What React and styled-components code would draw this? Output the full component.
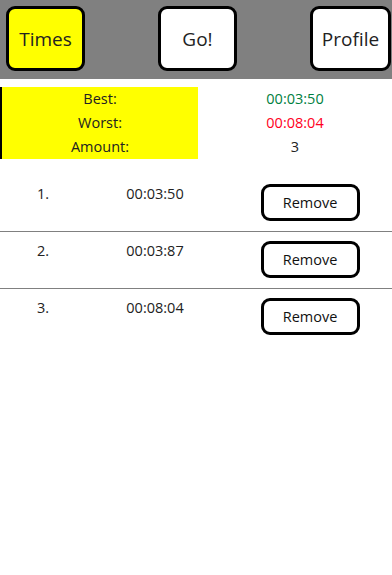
import styled, { createGlobalStyle } from "styled-components";

const GlobalStyle = createGlobalStyle`
  body {
    margin: 0;
    background: #ffffff;
    font-family: "Open Sans", "Noto Sans", sans-serif;
    color: #222222;
  }
`;

const Header = styled.header`
  display: flex;
  justify-content: space-between;
  align-items: flex-start;
  height: 79px;
  box-sizing: border-box;
  padding: 6px 1px 0 6px;
  background-color: #808080;
`;

const NavButton = styled.button`
  box-sizing: border-box;
  width: ${({ $wide }) => ($wide ? "81px" : "79px")};
  height: 65px;
  padding: 0;
  border: 3px solid #000000;
  border-radius: 9px;
  background-color: ${({ $active }) => ($active ? "#ffff00" : "#ffffff")};
  font-family: inherit;
  font-size: 19px;
  color: #222222;
  cursor: pointer;
`;

const Stats = styled.section`
  display: grid;
  grid-template-columns: 198px 1fr;
  margin-top: 8px;
`;

const Labels = styled.div`
  display: flex;
  flex-direction: column;
  background-color: #ffff00;
  border-left: 2px solid #000000;
`;

const Values = styled.div`
  display: flex;
  flex-direction: column;
`;

const Line = styled.span`
  height: 24px;
  line-height: 24px;
  text-align: center;
  font-size: 14.5px;
  color: ${({ $tone }) => $tone || "#222222"};
`;

const List = styled.ul`
  list-style: none;
  margin: 16px 0 0;
  padding: 0;
`;

const Row = styled.li`
  display: grid;
  grid-template-columns: 86px 138px 1fr;
  align-items: start;
  padding: 9px 0 10px;
  border-bottom: 1px solid #808080;

  &:last-child {
    border-bottom: none;
  }
`;

const Cell = styled.span`
  text-align: center;
  font-size: 14.5px;
  line-height: 20px;
`;

const RemoveButton = styled.button`
  justify-self: center;
  margin-left: 4px;
  box-sizing: border-box;
  width: 99px;
  height: 37px;
  border: 3px solid #000000;
  border-radius: 9px;
  background: #ffffff;
  font-family: inherit;
  font-size: 14.5px;
  color: #111111;
  cursor: pointer;
`;

const times = [
  { id: 1, value: "00:03:50" },
  { id: 2, value: "00:03:87" },
  { id: 3, value: "00:08:04" },
];

export default function App() {
  return (
    <>
      <GlobalStyle />
      <Header>
        <NavButton $active>Times</NavButton>
        <NavButton>Go!</NavButton>
        <NavButton $wide>Profile</NavButton>
      </Header>
      <Stats>
        <Labels>
          <Line>Best:</Line>
          <Line>Worst:</Line>
          <Line>Amount:</Line>
        </Labels>
        <Values>
          <Line $tone="#008040">00:03:50</Line>
          <Line $tone="#ff0022">00:08:04</Line>
          <Line>{times.length}</Line>
        </Values>
      </Stats>
      <List>
        {times.map((t, i) => (
          <Row key={t.id}>
            <Cell>{i + 1}.</Cell>
            <Cell>{t.value}</Cell>
            <RemoveButton>Remove</RemoveButton>
          </Row>
        ))}
      </List>
    </>
  );
}
